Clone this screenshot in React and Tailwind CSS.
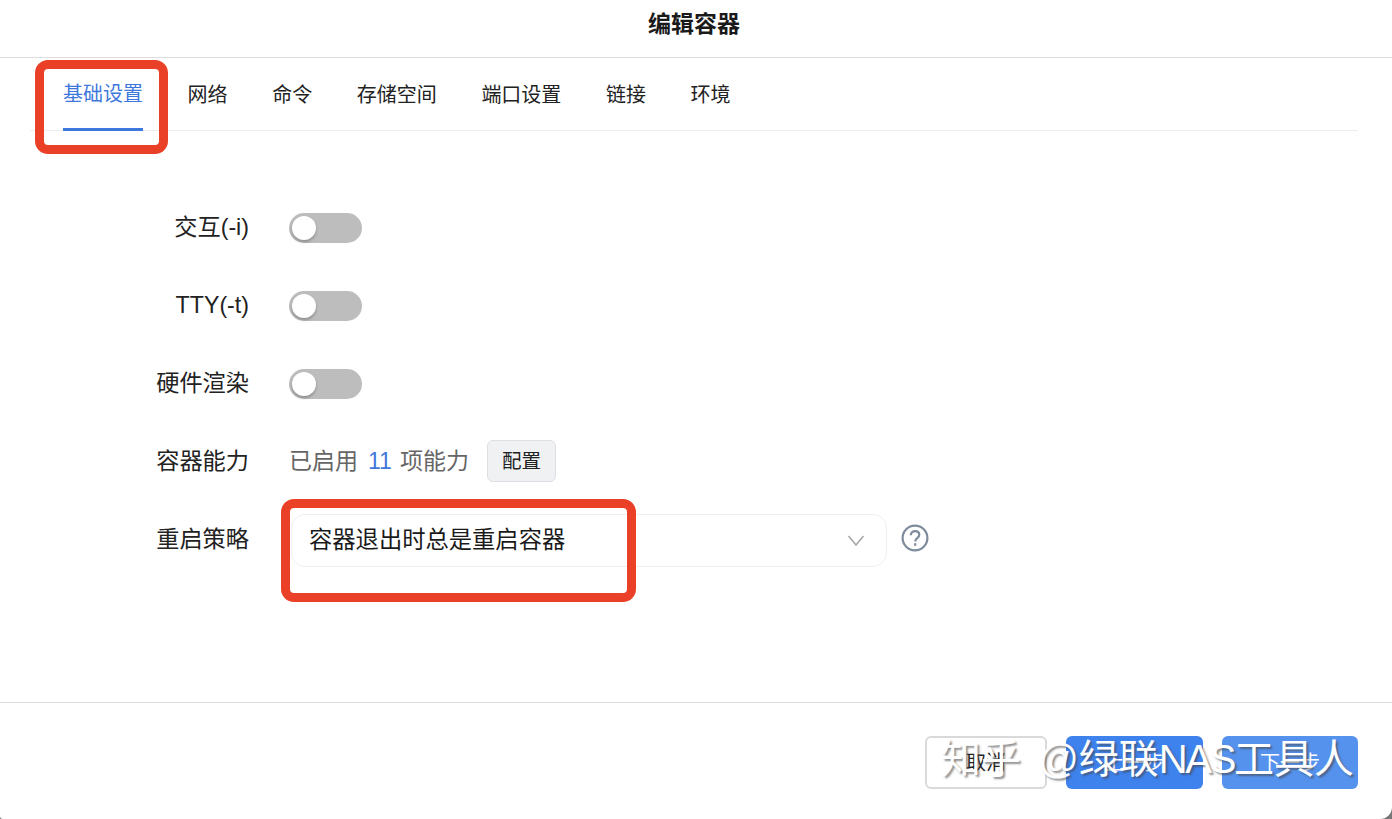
import React from "react";

const cjk = { fontFamily: '"Liberation Sans", "Noto Sans CJK SC", sans-serif' };

const tabs = ["基础设置", "网络", "命令", "存储空间", "端口设置", "链接", "环境"];

function Toggle() {
  return (
    <div className="flex h-[30px] w-[73px] items-center rounded-full bg-[#bdbdbd] pl-[3px]">
      <div className="h-6 w-6 rounded-full bg-white shadow-[0_2px_3px_rgba(0,0,0,0.25)]" />
    </div>
  );
}

function Row({ label, children }) {
  return (
    <div className="flex h-[78px] items-center">
      <div className="w-[249px] pb-[2px] text-right text-[23.2px] text-[#222]">{label}</div>
      <div className="ml-10 flex items-center">{children}</div>
    </div>
  );
}

export default function App() {
  return (
    <div className="h-[819px] w-[1392px] overflow-hidden bg-[#777]">
      <div style={cjk} className="relative flex h-[819px] w-[1392px] flex-col overflow-hidden rounded-bl-[3px] rounded-br-[12px] bg-white">
        <div className="flex h-[58px] items-center justify-center border-b border-[#dedede] pb-[8px] pr-[4px] text-[23px] font-bold text-[#1a1a1a]">
          编辑容器
        </div>

        {/* tabs */}
        <div className="mx-[30px] mr-[34px] flex h-[73px] gap-[44.6px] border-b border-[#eeeeee] pl-[33px]">
          {tabs.map((t, i) => (
            <div
              key={t}
              className={
                i === 0
                  ? "flex h-[73px] items-center border-b-[3px] border-[#3f78dc] pt-[1px] text-[20px] text-[#3f78dc]"
                  : "flex h-[73px] items-center pt-[1px] text-[20px] text-[#222]"
              }
            >
              {t}
            </div>
          ))}
        </div>

        {/* form */}
        <div className="mt-[58px] flex flex-col">
          <Row label="交互(-i)"><Toggle /></Row>
          <Row label="TTY(-t)"><Toggle /></Row>
          <Row label="硬件渲染"><Toggle /></Row>
          <Row label="容器能力">
            <span className="pb-[1px] text-[23px] text-[#666]">已启用</span>
            <span className="ml-[10px] pb-[1px] text-[23px] text-[#3f78dc]">11</span>
            <span className="ml-[8px] pb-[1px] text-[23px] text-[#666]">项能力</span>
            <button className="mb-[2px] ml-[18px] h-[42px] w-[69px] rounded-md border border-[#dcdfe3] bg-[#f0f1f3] pt-[2px] text-[19.5px] text-[#222]">配置</button>
          </Row>
          <Row label="重启策略">
            <div className="ml-[2px] flex h-[53px] w-[596px] items-center justify-between rounded-[14px] border border-[#efefef] pl-[17px] pr-[21px] text-[23.3px] text-[#1a1a1a]">
              <span>容器退出时总是重启容器</span>
              <svg width="18" height="13" viewBox="0 0 18 13" fill="none" stroke="#a8a8a8" strokeWidth="1.6">
                <path d="M1.5 2 9 11 16.5 2" />
              </svg>
            </div>
            <svg className="mb-[4px] ml-[14px]" width="28" height="28" viewBox="0 0 28 28" fill="none" stroke="#7d8b9b" strokeWidth="2.2">
              <circle cx="14" cy="14" r="12.4" />
              <path d="M9.8 11.2c0-2.5 1.9-4.1 4.3-4.1s4.2 1.5 4.2 3.7c0 3.3-4.1 3.2-4.1 6.6" />
              <path d="M14.2 19.2v2.6" />
            </svg>
          </Row>
        </div>

        {/* footer */}
        <div className="mt-auto flex h-[117px] items-start justify-end gap-[19px] border-t border-[#dedede] pr-[34px] pt-[33px]">
          <button className="h-[53px] w-[122px] rounded-md border-2 border-[#d9d9d9] bg-white text-[20px] text-[#222]">取消</button>
          <button className="h-[53px] w-[137px] rounded-md bg-[#3e82ee] text-[20px] text-white">上一步</button>
          <button className="h-[53px] w-[136px] rounded-md bg-[#5592ee] text-[20px] text-white">下一步</button>
        </div>

        {/* red annotation boxes */}
        <div className="absolute left-[35px] top-[60px] h-[94px] w-[133px] rounded-[13px] border-[9px] border-[#ea4027]" />
        <div className="absolute left-[281px] top-[499px] h-[103px] w-[355px] rounded-[13px] border-[9px] border-[#ea4027]" />

        {/* zhihu watermark */}
        <div className="absolute left-[941px] top-[732px] whitespace-nowrap text-[40px] leading-[54px] text-white [text-shadow:2px_2px_2px_rgba(70,70,70,0.6)]">
          知乎 <span className="ml-[6px]">@绿联</span><span className="tracking-[-2.3px]">NAS</span>工具人
        </div>
      </div>
    </div>
  );
}
